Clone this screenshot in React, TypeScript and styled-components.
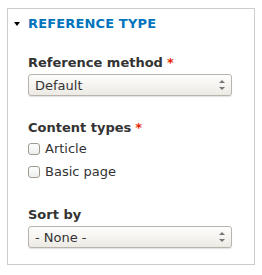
import React from "react";
import styled, { createGlobalStyle } from "styled-components";

const GlobalStyle = createGlobalStyle`
  html, body {
    margin: 0;
    padding: 0;
    background: #fff;
  }
  body {
    font-family: "DejaVu Sans", "Liberation Sans", sans-serif;
    font-size: 13px;
    color: #333;
  }
`;

const Fieldset = styled.section`
  margin: 8px 7px 0 7px;
  width: 246px;
  height: 255px;
  border: 1px solid #ccc;
`;

const Legend = styled.div`
  display: flex;
  align-items: center;
  gap: 8px;
  padding: 6px 0 0 6px;
  height: 18px;
  line-height: 18px;
`;

const Caret = styled.span`
  width: 0;
  height: 0;
  border-left: 3px solid transparent;
  border-right: 3px solid transparent;
  border-top: 4px solid #000;
`;

const LegendText = styled.a`
  color: #0074bd;
  font-weight: bold;
  text-transform: uppercase;
  text-decoration: none;
  font-size: 13px;
  letter-spacing: 0.15px;
`;

const Body = styled.div`
  padding: 0 22px 0 20px;
`;

const Item = styled.div<{ $top: number }>`
  margin-top: ${(p) => p.$top}px;
`;

const Label = styled.label<{ $gap?: number }>`
  display: block;
  font-weight: bold;
  line-height: 18px;
  height: 18px;
  margin-bottom: ${(p) => p.$gap ?? 2}px;
`;

const Required = styled.span`
  color: #e62600;
  margin-left: 4px;
`;

const SelectWrap = styled.div`
  position: relative;
  width: 204px;
`;

const Select = styled.select`
  appearance: none;
  display: block;
  width: 100%;
  height: 22px;
  box-sizing: border-box;
  padding: 0 20px 0 6px;
  border: 1px solid #b8b4ad;
  border-radius: 3px;
  background: linear-gradient(#fefefd, #eceae4);
  box-shadow: 0 1px 1px rgba(0, 0, 0, 0.12);
  font-family: "DejaVu Sans", sans-serif;
  font-size: 13px;
  color: #333;
  outline: none;
`;

const Arrows = styled.svg`
  position: absolute;
  right: 7px;
  top: 6px;
  pointer-events: none;
`;

const CheckRow = styled.label`
  display: flex;
  align-items: center;
  gap: 5px;
  height: 23px;
  line-height: 18px;
`;

const Checkbox = styled.input`
  appearance: none;
  margin: 0;
  width: 12px;
  height: 12px;
  border: 1px solid #a09a93;
  border-radius: 3px;
  background: linear-gradient(#fdfdfd, #eeeeee);
  box-sizing: border-box;
`;

function Chooser({ value }: { value: string }) {
  return (
    <SelectWrap>
      <Select defaultValue={value}>
        <option>{value}</option>
      </Select>
      <Arrows width="6" height="10" viewBox="0 0 6 10">
        <path d="M3 0 L6 3 L0 3 Z" fill="#777" />
        <path d="M0 7 L6 7 L3 10 Z" fill="#777" />
      </Arrows>
    </SelectWrap>
  );
}

export default function App() {
  return (
    <>
      <GlobalStyle />
      <Fieldset>
        <Legend>
          <Caret />
          <LegendText href="#">Reference type</LegendText>
        </Legend>
        <Body>
          <Item $top={21}>
            <Label>
              Reference method<Required>*</Required>
            </Label>
            <Chooser value="Default" />
          </Item>
          <Item $top={23}>
            <Label $gap={0}>
              Content types<Required>*</Required>
            </Label>
            <CheckRow>
              <Checkbox type="checkbox" />
              Article
            </CheckRow>
            <CheckRow>
              <Checkbox type="checkbox" />
              Basic page
            </CheckRow>
          </Item>
          <Item $top={23}>
            <Label>Sort by</Label>
            <Chooser value="- None -" />
          </Item>
        </Body>
      </Fieldset>
    </>
  );
}
